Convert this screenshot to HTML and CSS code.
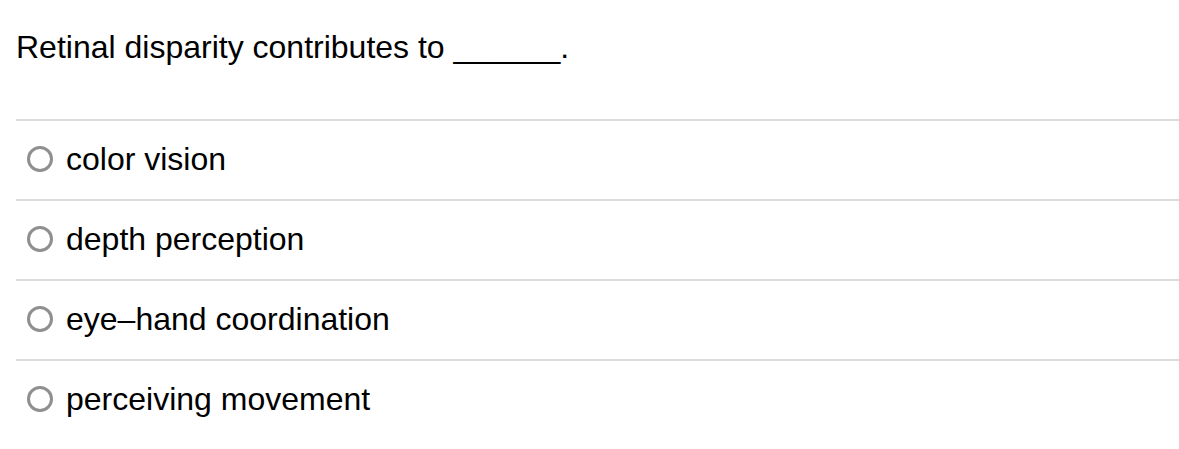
FILE: index.html
```html
<!DOCTYPE html>
<html>
<head>
<meta charset="utf-8">
<link rel="stylesheet" href="styles.css">
</head>
<body>
<div class="quiz">
  <div class="question">Retinal disparity contributes to ______.</div>
  <ul class="options">
    <li class="option"><span class="radio"></span><span class="label">color vision</span></li>
    <li class="option"><span class="radio"></span><span class="label">depth perception</span></li>
    <li class="option"><span class="radio"></span><span class="label">eye–hand coordination</span></li>
    <li class="option"><span class="radio"></span><span class="label">perceiving movement</span></li>
  </ul>
</div>
</body>
</html>
```
FILE: styles.css
```css
html, body {
  margin: 0;
  padding: 0;
  background: #fff;
}
body {
  font-family: "Liberation Sans", Arial, sans-serif;
  color: #000;
  font-size: 32px;
}
.quiz {
  padding-left: 16px;
}
.question {
  padding-top: 27px;
  line-height: 40px;
  margin-bottom: 52px;
}
.options {
  list-style: none;
  margin: 0;
  padding: 0;
}
.option {
  display: flex;
  align-items: center;
  height: 76px;
  padding-bottom: 2px;
  border-top: 2px solid #dcdcdc;
  padding-left: 11px;
}
.radio {
  box-sizing: border-box;
  width: 26px;
  height: 26px;
  border: 3px solid #8f8f8f;
  border-radius: 50%;
  margin-right: 13px;
  flex: none;
}
.label {
  line-height: 40px;
}
```
